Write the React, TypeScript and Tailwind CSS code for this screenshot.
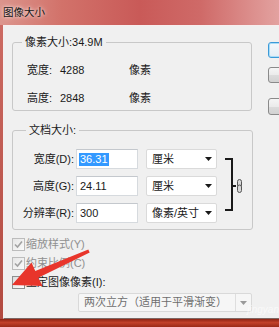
import React from "react";

function Arrow() {
  return (
    <svg width="7" height="4" viewBox="0 0 7 4" className="shrink-0">
      <path d="M0 0 H7 L3.5 4 Z" fill="#1a1a1a" />
    </svg>
  );
}

function Check({ checked, disabled }: { checked: boolean; disabled: boolean }) {
  return (
    <div
      className={
        "w-[13px] h-[13px] shrink-0 border flex items-center justify-center " +
        (disabled
          ? "border-[#bcbcbc] bg-[linear-gradient(135deg,#e6e6e6,#fafafa)]"
          : "border-[#8e8f8f] bg-[linear-gradient(135deg,#dcdcdc,#ffffff)]")
      }
    >
      {checked && (
        <svg width="11" height="11" viewBox="0 0 11 11">
          <path d="M2 5.5 L4.5 8 L9 2.5" fill="none" stroke="#a2a2a2" strokeWidth="1.6" />
        </svg>
      )}
    </div>
  );
}

function unitFor(label: string) {
  if (label.startsWith("分辨率")) return "像素/英寸";
  return "厘米";
}

function SizeRow({ label, value, selected }: { label: string; value: string; selected?: boolean }) {
  return (
    <div className="flex items-center h-[20px]">
      <div className="w-[61px] text-right text-[11px] leading-[14px] text-[#1a1a1a]">{label}</div>
      <div className="ml-[2px] w-[62px] h-[20px] bg-white border border-[#d6dade] border-t-[#c4c8cd] flex items-center pl-[2px]">
        {selected ? (
          <span className="bg-[#3399ff] text-white text-[11px] leading-[13px] px-[1px]">{value}</span>
        ) : (
          <span className="text-[#1a1a1a] text-[11px] leading-[13px] pl-[1px]">{value}</span>
        )}
      </div>
      <div className="ml-[8px] w-[71px] h-[20px] bg-white border border-[#dadada] rounded-[2px] flex items-center justify-between pl-[5px] pr-[4px]">
        <span className="text-[11px] leading-[13px] text-[#1a1a1a]">{unitFor(label)}</span>
        <Arrow />
      </div>
    </div>
  );
}

export default function App() {
  return (
    <div className="relative w-[279px] h-[327px] overflow-hidden flex flex-col bg-[#c45a52] font-['Liberation_Sans','Noto_Sans_CJK_SC',sans-serif]">
      {/* title bar */}
      <div className="h-[25px] shrink-0 flex items-center pl-[3px] bg-[linear-gradient(90deg,#dc958d_0%,#d2726a_22%,#c95a58_50%,#cf6a68_72%,#e3a2a0_100%)]">
        <span className="text-[10.5px] leading-none text-[#141414] [text-shadow:0_0_5px_#f6dcd8,0_0_3px_#f6dcd8]">图像大小</span>
      </div>

      {/* frame + body */}
      <div className="flex-1 flex pl-[3px] bg-[linear-gradient(180deg,#cc6a62,#b24a40)]">
        <div className="flex-1 flex bg-[#f0f0f0] border-l border-t border-[#f7eeee] border-b border-b-[#7c6764]">
          {/* main column */}
          <div className="ml-[8px] w-[240px] shrink-0 flex flex-col">
            <fieldset className="mt-[9px] w-[240px] border border-[#c8c8c8] rounded-[3px]">
              <legend className="ml-[9px] px-[3px] text-[11px] leading-[15px] text-[#1a1a1a]">像素大小:34.9M</legend>
              <div className="pt-[12px] pb-[4px] pl-[14px] flex flex-col gap-[12px] text-[11px] leading-[16px] text-[#1a1a1a]">
                <div className="grid grid-cols-[33px_69px_auto]">
                  <span>宽度:</span>
                  <span>4288</span>
                  <span>像素</span>
                </div>
                <div className="grid grid-cols-[33px_69px_auto]">
                  <span>高度:</span>
                  <span>2848</span>
                  <span>像素</span>
                </div>
              </div>
            </fieldset>

            <fieldset className="mt-[12px] w-[241px] border border-[#c8c8c8] rounded-[3px]">
              <legend className="ml-[13px] px-[3px] text-[11px] leading-[15px] text-[#1a1a1a]">文档大小:</legend>
              <div className="pt-[11px] pb-[6px] flex">
                <div className="flex flex-col gap-[7px]">
                  <SizeRow label="宽度(D):" value="36.31" selected />
                  <SizeRow label="高度(G):" value="24.11" />
                  <SizeRow label="分辨率(R):" value="300" />
                </div>
                <svg width="20" height="74" viewBox="0 0 20 74" className="ml-[7px] shrink-0">
                  <rect x="1" y="9" width="8" height="2" fill="#1a1a1a" />
                  <rect x="7" y="9" width="2" height="53" fill="#1a1a1a" />
                  <rect x="1" y="60" width="8" height="2" fill="#1a1a1a" />
                  <rect x="9" y="36" width="3" height="2" fill="#1a1a1a" />
                  <rect x="13.5" y="30.5" width="4" height="7.5" rx="2" fill="#d8d8d8" stroke="#555" strokeWidth="1" />
                  <rect x="13.5" y="36" width="4" height="7.5" rx="2" fill="#d8d8d8" stroke="#555" strokeWidth="1" />
                </svg>
              </div>
            </fieldset>

            <div className="mt-[8px] flex flex-col gap-[6px]">
              <div className="flex items-center gap-[1px] h-[13px]">
                <Check checked disabled />
                <span className="text-[11px] leading-[13px] text-[#8f8f8f]">缩放样式(Y)</span>
              </div>
              <div className="flex items-center gap-[1px] h-[13px]">
                <Check checked disabled />
                <span className="text-[11px] leading-[13px] text-[#8f8f8f]">约束比例(C)</span>
              </div>
              <div className="flex items-center gap-[1px] h-[13px]">
                <Check checked={false} disabled={false} />
                <span className="text-[11px] leading-[13px] text-[#1a1a1a]">重定图像像素(I):</span>
              </div>
            </div>

            <div className="mt-[4px] ml-[66px] w-[174px] h-[19px] flex bg-[#f6f6f6] border border-[#d9d9d9] rounded-[2px]">
              <div className="flex-1 flex items-center pl-[5px] text-[11px] leading-[13px] text-[#6e6e6e]">两次立方（适用于平滑渐变）</div>
              <div className="w-[16px] border-l border-[#dedede] flex items-center justify-center">
                <svg width="7" height="4" viewBox="0 0 7 4">
                  <path d="M0 0 H7 L3.5 4 Z" fill="#9a9a9a" />
                </svg>
              </div>
            </div>
          </div>

          {/* buttons column */}
          <div className="ml-[16px] mt-[16px] flex flex-col">
            <div className="w-[75px] h-[16px] rounded-[3px] border border-[#3c9ad8] bg-[linear-gradient(180deg,#f4f8fb,#e4edf4)] shadow-[inset_0_0_0_1px_#a8dcf7]" />
            <div className="mt-[9px] w-[75px] h-[16px] rounded-[3px] border border-[#8a8a8a] bg-[linear-gradient(180deg,#f5f5f5_0%,#ebebeb_50%,#dcdcdc_51%,#d2d2d2_100%)]" />
            <div className="mt-[15px] w-[75px] h-[17px] rounded-[3px] border border-[#8a8a8a] bg-[linear-gradient(180deg,#f5f5f5_0%,#ebebeb_50%,#dcdcdc_51%,#d2d2d2_100%)]" />
          </div>
        </div>
      </div>

      {/* bottom frame */}
      <div className="h-[8px] shrink-0 bg-[linear-gradient(180deg,#8e2414_0%,#c2412a_45%,#9a2a18_100%)]" />

      {/* watermark */}
      <div className="absolute right-[0px] bottom-[11px] text-[10px] leading-[12px] text-white/60 italic pointer-events-none">jingyan</div>

      {/* red annotation arrow */}
      <svg className="absolute left-0 top-0 pointer-events-none" width="279" height="327" viewBox="0 0 279 327">
        <polygon
          points="12,285 31.5,262.5 35.3,271 88.3,249.6 89.7,252.4 38.3,277.8 42.5,286"
          fill="#e8352b"
        />
      </svg>
    </div>
  );
}
